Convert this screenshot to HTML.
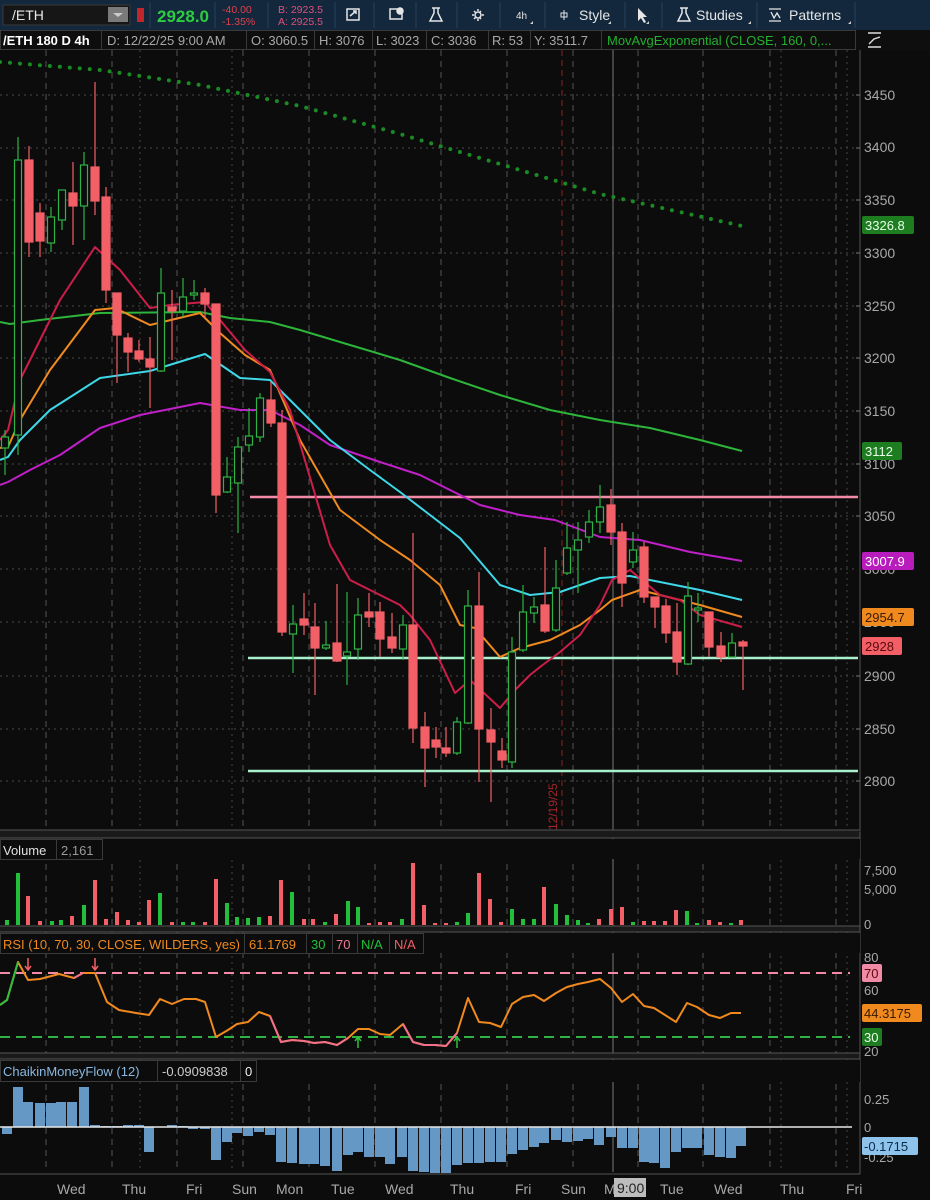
<!DOCTYPE html>
<html><head><meta charset="utf-8"><style>
body{margin:0;width:930px;height:1200px;overflow:hidden;background:#0c0c0c;font-family:"Liberation Sans",sans-serif}
svg{display:block}
</style></head><body>
<svg width="930" height="1200" viewBox="0 0 930 1200" xmlns="http://www.w3.org/2000/svg" font-family="Liberation Sans, sans-serif">
<rect width="930" height="1200" fill="#0c0c0c"/>
<!-- toolbar -->
<rect x="0" y="0" width="930" height="30" fill="#13273d"/>
<rect x="3" y="5" width="127" height="20" fill="#161616" stroke="#3a3a3a"/>
<text x="12" y="20" fill="#e8e8e8" font-size="14">/ETH</text>
<rect x="108" y="7" width="20" height="15" fill="#7a7a7a"/>
<path d="M113 13 L123 13 L118 17Z" fill="#ccc"/>
<rect x="137" y="8" width="7" height="14" fill="#c0262b"/>
<line x1="150" y1="2" x2="150" y2="28" stroke="#24405c"/>
<text x="157" y="22" fill="#2ecc40" font-size="17" font-weight="bold">2928.0</text>
<line x1="215" y1="2" x2="215" y2="28" stroke="#24405c"/>
<text x="222" y="13" fill="#e0404a" font-size="10.5">-40.00</text>
<text x="222" y="25" fill="#e0404a" font-size="10.5">-1.35%</text>
<line x1="268" y1="2" x2="268" y2="28" stroke="#24405c"/>
<text x="278" y="13" fill="#e0507a" font-size="10.5">B: 2923.5</text>
<text x="278" y="25" fill="#e0507a" font-size="10.5">A: 2925.5</text>
<g stroke="#24405c"><line x1="335" y1="2" x2="335" y2="28"/><line x1="374" y1="2" x2="374" y2="28"/><line x1="416" y1="2" x2="416" y2="28"/><line x1="457" y1="2" x2="457" y2="28"/><line x1="500" y1="2" x2="500" y2="28"/><line x1="545" y1="2" x2="545" y2="28"/><line x1="625" y1="2" x2="625" y2="28"/><line x1="662" y1="2" x2="662" y2="28"/><line x1="757" y1="2" x2="757" y2="28"/><line x1="855" y1="2" x2="855" y2="28"/></g>
<g fill="none" stroke="#e6e6e6" stroke-width="1.5">
<rect x="347" y="9" width="12" height="11"/><path d="M350 16 L356 11 M353 11 L356 11 L356 14"/>
<rect x="390" y="9" width="12" height="10"/><circle cx="400" cy="11" r="3" fill="#e6e6e6"/>
<path d="M434 8 L434 13 L430 21 L442 21 L438 13 L438 8 M432 8 L440 8"/>
<circle cx="478" cy="15" r="3"/><path d="M478 9V11M478 19V21M472 15H474M482 15H484M474 11L475.5 12.5M481 11L479.5 12.5M474 19L475.5 17.5M481 19L479.5 17.5"/>
</g>
<text x="516" y="19" fill="#e6e6e6" font-size="10">4h</text>
<path d="M564 10V20M561 13h6v4h-6z" stroke="#e6e6e6" fill="none"/>
<text x="579" y="20" fill="#e6e6e6" font-size="14">Style</text>
<path d="M638 8 L638 21 L641 18 L644 23 L646 22 L643 17 L647 17Z" fill="#e6e6e6"/>
<path d="M682 8 L682 13 L678 21 L690 21 L686 13 L686 8 M680 8 L688 8" fill="none" stroke="#e6e6e6" stroke-width="1.5"/>
<text x="696" y="20" fill="#e6e6e6" font-size="14">Studies</text>
<path d="M769 9H781M771 12 L774 18 L777 13 L780 18M769 21H781" fill="none" stroke="#e6e6e6" stroke-width="1.3"/>
<text x="789" y="20" fill="#e6e6e6" font-size="14">Patterns</text>
<g fill="#ccc"><path d="M530 24l3-3v3z"/><path d="M608 24l3-3v3z"/><path d="M646 24l3-3v3z"/><path d="M748 24l3-3v3z"/><path d="M848 24l3-3v3z"/></g>
<!-- header row -->
<rect x="0" y="30" width="930" height="20" fill="#0e0e0e"/>
<g stroke="#3a3a3a" fill="none">
<rect x="0.5" y="30.5" width="101" height="19"/><rect x="101.5" y="30.5" width="145" height="19"/><rect x="246.5" y="30.5" width="68" height="19"/><rect x="314.5" y="30.5" width="58" height="19"/><rect x="372.5" y="30.5" width="54" height="19"/><rect x="426.5" y="30.5" width="62" height="19"/><rect x="488.5" y="30.5" width="42" height="19"/><rect x="530.5" y="30.5" width="71" height="19"/><rect x="601.5" y="30.5" width="254" height="19"/></g>
<g font-size="13" fill="#a8a8a8">
<text x="3" y="45" fill="#fff" font-weight="bold">/ETH 180 D 4h</text>
<text x="107" y="45">D: 12/22/25 9:00 AM</text>
<text x="251" y="45">O: 3060.5</text>
<text x="319" y="45">H: 3076</text>
<text x="376" y="45">L: 3023</text>
<text x="431" y="45">C: 3036</text>
<text x="492" y="45">R: 53</text>
<text x="534" y="45">Y: 3511.7</text>
<text x="607" y="45" fill="#22b02e">MovAvgExponential (CLOSE, 160, 0,...</text>
</g>
<path d="M868 33h13M868 47h13M869 44 L874 39 L880 37" stroke="#ddd" fill="none" stroke-width="1.4"/>

<!-- main grid -->
<g stroke="#4a4a4a" stroke-dasharray="2,4">
<line x1="0" y1="95" x2="858" y2="95"/><line x1="0" y1="148" x2="858" y2="148"/><line x1="0" y1="200" x2="858" y2="200"/><line x1="0" y1="253" x2="858" y2="253"/><line x1="0" y1="306" x2="858" y2="306"/><line x1="0" y1="358" x2="858" y2="358"/><line x1="0" y1="411" x2="858" y2="411"/><line x1="0" y1="464" x2="858" y2="464"/><line x1="0" y1="516" x2="858" y2="516"/><line x1="0" y1="569" x2="858" y2="569"/><line x1="0" y1="622" x2="858" y2="622"/><line x1="0" y1="676" x2="858" y2="676"/><line x1="0" y1="729" x2="858" y2="729"/><line x1="0" y1="781" x2="858" y2="781"/>
</g>
<g stroke="#555" stroke-dasharray="6,5">
<line x1="46" y1="50" x2="46" y2="1172"/><line x1="112" y1="50" x2="112" y2="1172"/><line x1="177" y1="50" x2="177" y2="1172"/><line x1="243" y1="50" x2="243" y2="1172"/><line x1="309" y1="50" x2="309" y2="1172"/><line x1="375" y1="50" x2="375" y2="1172"/><line x1="441" y1="50" x2="441" y2="1172"/><line x1="507" y1="50" x2="507" y2="1172"/><line x1="573" y1="50" x2="573" y2="1172"/><line x1="638" y1="50" x2="638" y2="1172"/><line x1="703" y1="50" x2="703" y2="1172"/><line x1="770" y1="50" x2="770" y2="1172"/><line x1="836" y1="50" x2="836" y2="1172"/>
</g>
<g stroke="#444" stroke-dasharray="2,4"><line x1="140" y1="50" x2="140" y2="1172"/><line x1="232" y1="50" x2="232" y2="1172"/><line x1="781" y1="50" x2="781" y2="1172"/><line x1="847" y1="50" x2="847" y2="1172"/></g>
<line x1="613" y1="50" x2="613" y2="1172" stroke="#777"/>
<line x1="562" y1="50" x2="562" y2="830" stroke="#8a1f25" stroke-dasharray="6,4"/>
<text transform="translate(557,830) rotate(-90)" fill="#a0262c" font-size="12">12/19/25</text>

<!-- 200 MA dotted -->
<path d="M0 62 L100 70 L200 85 L300 106 L400 134 L500 164 L600 194 L742 226" fill="none" stroke="#1a8a24" stroke-width="4" stroke-linecap="round" stroke-dasharray="0,10"/>
<!-- horizontal levels -->
<line x1="250" y1="497" x2="858" y2="497" stroke="#f28aa8" stroke-width="2.5"/>
<line x1="248" y1="658" x2="858" y2="658" stroke="#a8f0cc" stroke-width="2.5"/>
<line x1="248" y1="771" x2="858" y2="771" stroke="#a8f0cc" stroke-width="2.5"/>

<!-- MAs -->
<g fill="none" stroke-width="2" stroke-linejoin="round">
<polyline stroke="#2cb53a" points="0,322 10,324 40,320 100,313 200,312 230,318 270,322 300,330 350,345 400,360 450,378 500,395 550,410 600,420 650,428 700,440 742,451"/>
<polyline stroke="#c020c8" points="0,485 8,482 30,470 60,455 100,428 140,415 200,403 240,410 270,410 300,425 330,445 380,462 420,475 450,490 480,505 520,515 555,520 600,537 640,540 690,552 742,561"/>
<polyline stroke="#3ed8e8" points="0,460 8,457 20,440 50,410 100,378 150,371 205,354 240,378 270,380 300,410 330,440 370,470 400,492 430,515 460,538 500,585 530,595 560,592 600,578 630,576 660,582 700,590 742,600"/>
<polyline stroke="#f08a1e" points="0,448 8,447 20,420 50,370 95,310 115,308 150,325 200,313 220,333 245,355 270,370 300,440 340,510 380,540 410,560 440,585 460,625 475,628 500,657 520,648 550,640 580,625 600,610 612,600 640,590 660,595 680,600 700,605 742,617"/>
<polyline stroke="#cc1e4a" points="0,440 8,430 20,380 60,300 95,247 120,270 150,308 170,305 205,302 220,320 245,350 270,372 290,410 330,545 350,580 380,595 400,605 410,615 430,640 455,693 470,680 500,708 515,690 530,675 540,667 560,652 580,635 600,605 612,580 630,570 660,595 680,600 700,615 742,627"/>
</g>

<!-- candles -->
<g stroke-width="1.2">
<g stroke="#f25f66" fill="#f25f66">
<line x1="29" y1="146" x2="29" y2="257"/><rect x="25" y="160" width="8" height="82"/>
<line x1="40" y1="203" x2="40" y2="257"/><rect x="36" y="213" width="8" height="28"/>
<line x1="73" y1="162" x2="73" y2="245"/><rect x="69" y="193" width="8" height="13"/>
<line x1="95" y1="82" x2="95" y2="215"/><rect x="91" y="167" width="8" height="34"/>
<line x1="106" y1="187" x2="106" y2="303"/><rect x="102" y="197" width="8" height="93"/>
<line x1="117" y1="293" x2="117" y2="383"/><rect x="113" y="293" width="8" height="42"/>
<line x1="128" y1="333" x2="128" y2="372"/><rect x="124" y="338" width="8" height="14"/>
<line x1="139" y1="340" x2="139" y2="362"/><rect x="135" y="351" width="8" height="8"/>
<line x1="150" y1="337" x2="150" y2="408"/><rect x="146" y="359" width="8" height="8"/>
<line x1="172" y1="290" x2="172" y2="360"/><rect x="168" y="307" width="8" height="4"/>
<line x1="205" y1="288" x2="205" y2="318"/><rect x="201" y="293" width="8" height="11"/>
<line x1="216" y1="304" x2="216" y2="513"/><rect x="212" y="304" width="8" height="191"/>
<line x1="271" y1="382" x2="271" y2="427"/><rect x="267" y="400" width="8" height="23"/>
<line x1="282" y1="410" x2="282" y2="636"/><rect x="278" y="423" width="8" height="209"/>
<line x1="304" y1="593" x2="304" y2="635"/><rect x="300" y="619" width="8" height="6"/>
<line x1="315" y1="603" x2="315" y2="695"/><rect x="311" y="627" width="8" height="21"/>
<line x1="337" y1="584" x2="337" y2="662"/><rect x="333" y="643" width="8" height="18"/>
<line x1="369" y1="593" x2="369" y2="627"/><rect x="365" y="612" width="8" height="5"/>
<line x1="380" y1="602" x2="380" y2="657"/><rect x="376" y="612" width="8" height="27"/>
<line x1="392" y1="613" x2="392" y2="653"/><rect x="388" y="637" width="8" height="11"/>
<line x1="413" y1="533" x2="413" y2="743"/><rect x="409" y="625" width="8" height="103"/>
<line x1="425" y1="712" x2="425" y2="787"/><rect x="421" y="727" width="8" height="21"/>
<line x1="436" y1="727" x2="436" y2="758"/><rect x="432" y="740" width="8" height="7"/>
<line x1="446" y1="727" x2="446" y2="757"/><rect x="442" y="748" width="8" height="5"/>
<line x1="479" y1="572" x2="479" y2="782"/><rect x="475" y="606" width="8" height="123"/>
<line x1="491" y1="708" x2="491" y2="802"/><rect x="487" y="730" width="8" height="12"/>
<line x1="502" y1="738" x2="502" y2="768"/><rect x="498" y="751" width="8" height="9"/>
<line x1="545" y1="547" x2="545" y2="633"/><rect x="541" y="605" width="8" height="26"/>
<line x1="611" y1="489" x2="611" y2="545"/><rect x="607" y="505" width="8" height="27"/>
<line x1="622" y1="523" x2="622" y2="607"/><rect x="618" y="532" width="8" height="51"/>
<line x1="644" y1="542" x2="644" y2="603"/><rect x="640" y="547" width="8" height="50"/>
<line x1="655" y1="597" x2="655" y2="628"/><rect x="651" y="597" width="8" height="10"/>
<line x1="666" y1="599" x2="666" y2="643"/><rect x="662" y="606" width="8" height="27"/>
<line x1="677" y1="603" x2="677" y2="675"/><rect x="673" y="632" width="8" height="30"/>
<line x1="709" y1="612" x2="709" y2="657"/><rect x="705" y="612" width="8" height="35"/>
<line x1="721" y1="632" x2="721" y2="662"/><rect x="717" y="646" width="8" height="11"/>
<line x1="743" y1="640" x2="743" y2="690"/><rect x="739" y="642" width="8" height="4"/>
</g>
<g stroke="#2fb344" fill="#0c0c0c">
<line x1="5" y1="430" x2="5" y2="475"/><rect x="1.5" y="437" width="7" height="11"/>
<line x1="18" y1="137" x2="18" y2="455"/><rect x="14.5" y="160" width="7" height="275"/>
<line x1="51" y1="207" x2="51" y2="252"/><rect x="47.5" y="217" width="7" height="26"/>
<line x1="62" y1="190" x2="62" y2="230"/><rect x="58.5" y="190" width="7" height="30"/>
<line x1="84" y1="152" x2="84" y2="240"/><rect x="80.5" y="165" width="7" height="41"/>
<line x1="161" y1="268" x2="161" y2="372"/><rect x="157.5" y="293" width="7" height="78"/>
<line x1="183" y1="278" x2="183" y2="317"/><rect x="179.5" y="297" width="7" height="14"/>
<line x1="194" y1="280" x2="194" y2="300"/><rect x="190.5" y="293" width="7" height="2"/>
<line x1="227" y1="457" x2="227" y2="493"/><rect x="223.5" y="477" width="7" height="15"/>
<line x1="238" y1="437" x2="238" y2="533"/><rect x="234.5" y="447" width="7" height="36"/>
<line x1="249" y1="408" x2="249" y2="452"/><rect x="245.5" y="436" width="7" height="9"/>
<line x1="260" y1="393" x2="260" y2="442"/><rect x="256.5" y="398" width="7" height="39"/>
<line x1="293" y1="605" x2="293" y2="673"/><rect x="289.5" y="624" width="7" height="10"/>
<line x1="326" y1="621" x2="326" y2="650"/><rect x="322.5" y="645" width="7" height="3"/>
<line x1="347" y1="592" x2="347" y2="685"/><rect x="343.5" y="652" width="7" height="4"/>
<line x1="358" y1="598" x2="358" y2="660"/><rect x="354.5" y="615" width="7" height="34"/>
<line x1="403" y1="615" x2="403" y2="660"/><rect x="399.5" y="625" width="7" height="24"/>
<line x1="457" y1="717" x2="457" y2="755"/><rect x="453.5" y="722" width="7" height="31"/>
<line x1="468" y1="590" x2="468" y2="724"/><rect x="464.5" y="606" width="7" height="117"/>
<line x1="512" y1="637" x2="512" y2="768"/><rect x="508.5" y="652" width="7" height="110"/>
<line x1="523" y1="585" x2="523" y2="652"/><rect x="519.5" y="612" width="7" height="38"/>
<line x1="534" y1="597" x2="534" y2="623"/><rect x="530.5" y="607" width="7" height="6"/>
<line x1="556" y1="560" x2="556" y2="632"/><rect x="552.5" y="588" width="7" height="42"/>
<line x1="567" y1="522" x2="567" y2="575"/><rect x="563.5" y="548" width="7" height="25"/>
<line x1="578" y1="522" x2="578" y2="593"/><rect x="574.5" y="540" width="7" height="10"/>
<line x1="589" y1="510" x2="589" y2="543"/><rect x="585.5" y="522" width="7" height="15"/>
<line x1="600" y1="485" x2="600" y2="533"/><rect x="596.5" y="507" width="7" height="15"/>
<line x1="633" y1="532" x2="633" y2="568"/><rect x="629.5" y="550" width="7" height="12"/>
<line x1="688" y1="582" x2="688" y2="665"/><rect x="684.5" y="596" width="7" height="68"/>
<line x1="698" y1="593" x2="698" y2="622"/><rect x="694.5" y="608" width="7" height="2"/>
<line x1="732" y1="633" x2="732" y2="657"/><rect x="728.5" y="643" width="7" height="14"/>
</g>
</g>

<!-- right axis main -->
<rect x="860" y="50" width="70" height="1150" fill="#0c0c0c"/>
<line x1="860" y1="50" x2="860" y2="832" stroke="#555"/>
<g fill="#a8a8a8" font-size="14">
<text x="864" y="100">3450</text><text x="864" y="152">3400</text><text x="864" y="205">3350</text><text x="864" y="258">3300</text><text x="864" y="311">3250</text><text x="864" y="363">3200</text><text x="864" y="416">3150</text><text x="864" y="469">3100</text><text x="864" y="521">3050</text><text x="864" y="574">3000</text><text x="864" y="627">2950</text><text x="864" y="681">2900</text><text x="864" y="734">2850</text><text x="864" y="786">2800</text>
</g>
<g stroke="#777"><line x1="856" y1="95" x2="860" y2="95"/><line x1="856" y1="148" x2="860" y2="148"/><line x1="856" y1="200" x2="860" y2="200"/><line x1="856" y1="253" x2="860" y2="253"/><line x1="856" y1="306" x2="860" y2="306"/><line x1="856" y1="358" x2="860" y2="358"/><line x1="856" y1="411" x2="860" y2="411"/><line x1="856" y1="464" x2="860" y2="464"/><line x1="856" y1="516" x2="860" y2="516"/><line x1="856" y1="676" x2="860" y2="676"/><line x1="856" y1="729" x2="860" y2="729"/><line x1="856" y1="781" x2="860" y2="781"/></g>
<g font-size="13">
<rect x="862" y="216" width="52" height="18" rx="2" fill="#1d7d20"/><text x="865" y="230" fill="#e8ffe8">3326.8</text>
<rect x="862" y="442" width="40" height="18" rx="2" fill="#1d7d20"/><text x="865" y="456" fill="#e8ffe8">3112</text>
<rect x="862" y="552" width="52" height="18" rx="2" fill="#b81cbc"/><text x="865" y="566" fill="#fff">3007.9</text>
<rect x="862" y="608" width="52" height="18" rx="2" fill="#f08a1e"/><text x="865" y="622" fill="#3a1a00">2954.7</text>
<rect x="862" y="637" width="40" height="18" rx="2" fill="#f25f66"/><text x="865" y="651" fill="#5a0a0a">2928</text>
</g>

<!-- panel separators -->
<rect x="0" y="830" width="860" height="8" fill="#1a1a1a"/>
<line x1="0" y1="830" x2="860" y2="830" stroke="#555"/><line x1="0" y1="838" x2="860" y2="838" stroke="#555"/>
<rect x="0" y="926" width="860" height="6" fill="#1a1a1a"/><line x1="0" y1="926" x2="860" y2="926" stroke="#555"/><line x1="0" y1="932" x2="860" y2="932" stroke="#555"/>
<rect x="0" y="1053" width="860" height="6" fill="#1a1a1a"/><line x1="0" y1="1053" x2="860" y2="1053" stroke="#555"/><line x1="0" y1="1059" x2="860" y2="1059" stroke="#555"/>
<line x1="860" y1="832" x2="860" y2="1174" stroke="#555"/>
<line x1="0" y1="1174" x2="860" y2="1174" stroke="#555"/>

<!-- volume -->
<rect x="0" y="839" width="860" height="20" fill="#0c0c0c"/>
<rect x="0.5" y="839.5" width="56" height="20" fill="none" stroke="#3a3a3a"/><rect x="56.5" y="839.5" width="46" height="20" fill="none" stroke="#3a3a3a"/>
<text x="3" y="855" fill="#e0e0e0" font-size="13">Volume</text><text x="61" y="855" fill="#999" font-size="13">2,161</text>
<g fill="#22c03a">
<rect x="5" y="920" width="4" height="5"/><rect x="16" y="873" width="4" height="52"/><rect x="50" y="921" width="4" height="4"/><rect x="59" y="920" width="4" height="5"/><rect x="82" y="905" width="4" height="20"/><rect x="158" y="893" width="4" height="32"/><rect x="181" y="922" width="4" height="3"/><rect x="191" y="922" width="4" height="3"/><rect x="225" y="903" width="4" height="22"/><rect x="235" y="917" width="4" height="8"/><rect x="246" y="918" width="4" height="7"/><rect x="257" y="917" width="4" height="8"/><rect x="290" y="892" width="4" height="33"/><rect x="323" y="922" width="4" height="3"/><rect x="346" y="901" width="4" height="24"/><rect x="356" y="907" width="4" height="18"/><rect x="400" y="919" width="4" height="6"/><rect x="455" y="922" width="4" height="3"/><rect x="466" y="913" width="4" height="12"/><rect x="510" y="909" width="4" height="16"/><rect x="521" y="919" width="4" height="6"/><rect x="532" y="919" width="4" height="6"/><rect x="554" y="904" width="4" height="21"/><rect x="565" y="915" width="4" height="10"/><rect x="576" y="920" width="4" height="5"/><rect x="586" y="923" width="4" height="2"/><rect x="631" y="922" width="4" height="3"/><rect x="685" y="911" width="4" height="14"/><rect x="695" y="923" width="4" height="2"/><rect x="729" y="923" width="4" height="2"/>
</g>
<g fill="#f25f66">
<rect x="26" y="896" width="4" height="29"/><rect x="38" y="921" width="4" height="4"/><rect x="70" y="916" width="4" height="9"/><rect x="93" y="880" width="4" height="45"/><rect x="104" y="919" width="4" height="6"/><rect x="115" y="912" width="4" height="13"/><rect x="126" y="920" width="4" height="5"/><rect x="137" y="922" width="4" height="3"/><rect x="147" y="900" width="4" height="25"/><rect x="170" y="922" width="4" height="3"/><rect x="203" y="922" width="4" height="3"/><rect x="214" y="879" width="4" height="46"/><rect x="268" y="916" width="4" height="9"/><rect x="279" y="880" width="4" height="45"/><rect x="302" y="919" width="4" height="6"/><rect x="311" y="919" width="4" height="6"/><rect x="334" y="914" width="4" height="11"/><rect x="367" y="923" width="4" height="2"/><rect x="378" y="922" width="4" height="3"/><rect x="388" y="922" width="4" height="3"/><rect x="411" y="863" width="4" height="62"/><rect x="422" y="905" width="4" height="20"/><rect x="433" y="923" width="4" height="2"/><rect x="444" y="923" width="4" height="2"/><rect x="477" y="873" width="4" height="52"/><rect x="488" y="899" width="4" height="26"/><rect x="499" y="922" width="4" height="3"/><rect x="542" y="887" width="4" height="38"/><rect x="597" y="919" width="4" height="6"/><rect x="609" y="909" width="4" height="16"/><rect x="620" y="907" width="4" height="18"/><rect x="642" y="921" width="4" height="4"/><rect x="652" y="921" width="4" height="4"/><rect x="663" y="921" width="4" height="4"/><rect x="674" y="910" width="4" height="15"/><rect x="707" y="920" width="4" height="5"/><rect x="718" y="922" width="4" height="3"/><rect x="739" y="920" width="4" height="5"/>
</g>
<g fill="#a8a8a8" font-size="13"><text x="864" y="875">7,500</text><text x="864" y="894">5,000</text><text x="864" y="929">0</text></g>

<!-- RSI -->
<rect x="0" y="933" width="860" height="20" fill="#0c0c0c"/>
<g fill="none" stroke="#3a3a3a"><rect x="0.5" y="933.5" width="244" height="20"/><rect x="244.5" y="933.5" width="62" height="20"/><rect x="306.5" y="933.5" width="26" height="20"/><rect x="332.5" y="933.5" width="25" height="20"/><rect x="357.5" y="933.5" width="32" height="20"/><rect x="389.5" y="933.5" width="34" height="20"/></g>
<g font-size="13"><text x="3" y="949" fill="#f08a1e">RSI (10, 70, 30, CLOSE, WILDERS, yes)</text><text x="249" y="949" fill="#f08a1e">61.1769</text><text x="311" y="949" fill="#22c03a">30</text><text x="336" y="949" fill="#f27a96">70</text><text x="361" y="949" fill="#22c03a">N/A</text><text x="394" y="949" fill="#f25f66">N/A</text></g>
<line x1="0" y1="973" x2="850" y2="973" stroke="#f08aa5" stroke-width="2" stroke-dasharray="10,6"/>
<line x1="0" y1="1037" x2="850" y2="1037" stroke="#2fb344" stroke-width="2" stroke-dasharray="10,6"/>
<polyline fill="none" stroke="#f08a1e" stroke-width="2" stroke-linejoin="round" points="0,1005 7,1000 18,962 28,980 40,979 59,974 74,978 83,973 95,973 107,1002 119,1010 136,1013 149,1015 160,999 172,1004 184,999 196,999 205,1002 216,1037 228,1030 237,1024 248,1022 259,1012 270,1016 281,1042 292,1040 304,1041 314,1043 325,1042 337,1045 348,1038 358,1029 369,1029 380,1034 390,1035 403,1024 413,1042 424,1045 435,1045 446,1046 457,1033 468,998 479,1022 490,1023 501,1027 512,1004 523,997 534,995 544,1001 556,993 567,987 578,984 588,982 600,979 611,988 622,1002 633,994 644,1006 654,1008 665,1015 676,1022 687,1003 697,1007 709,1015 720,1018 731,1013 741,1013"/>
<polyline fill="none" stroke="#2fc040" stroke-width="2" points="0,1005 7,1000 18,962"/>
<polyline fill="none" stroke="#f2708a" stroke-width="2" points="74,978 83,973"/>
<polyline fill="none" stroke="#f2708a" stroke-width="2" points="270,1016 281,1042 292,1040 304,1041 314,1043 325,1042 337,1045 348,1038"/>
<polyline fill="none" stroke="#f2708a" stroke-width="2" points="403,1024 413,1042 424,1045 435,1045 446,1046 457,1033"/>
<g stroke-width="1.5"><path d="M28 958V970M25 966L28 970L31 966" stroke="#f25f66" fill="none"/><path d="M95 958V970M92 966L95 970L98 966" stroke="#f25f66" fill="none"/><path d="M358 1048V1037M355 1041L358 1037L361 1041" stroke="#2fc040" fill="none"/><path d="M457 1048V1037M454 1041L457 1037L460 1041" stroke="#2fc040" fill="none"/></g>
<g fill="#a8a8a8" font-size="13"><text x="864" y="962">80</text><text x="864" y="995">60</text><text x="864" y="1020">40</text><text x="864" y="1056">20</text></g>
<g font-size="13"><rect x="862" y="964" width="20" height="18" rx="2" fill="#f08aa5"/><text x="864" y="978" fill="#5a0a0a">70</text>
<rect x="862" y="1004" width="60" height="18" rx="2" fill="#f08a1e"/><text x="864" y="1018" fill="#3a1a00">44.3175</text>
<rect x="862" y="1028" width="20" height="18" rx="2" fill="#1d7d20"/><text x="864" y="1042" fill="#e8ffe8">30</text></g>

<!-- CMF -->
<rect x="0" y="1060" width="860" height="22" fill="#0c0c0c"/>
<g fill="none" stroke="#3a3a3a"><rect x="0.5" y="1060.5" width="157" height="21"/><rect x="157.5" y="1060.5" width="83" height="21"/><rect x="240.5" y="1060.5" width="16" height="21"/></g>
<g font-size="13"><text x="3" y="1076" fill="#8ab8e0">ChaikinMoneyFlow (12)</text><text x="162" y="1076" fill="#ccc">-0.0909838</text><text x="245" y="1076" fill="#eee">0</text></g>
<g fill="#6598c4">
<rect x="2" y="1127" width="10" height="7"/><rect x="13" y="1087" width="10" height="40"/><rect x="23" y="1102" width="10" height="25"/><rect x="35" y="1103" width="10" height="24"/><rect x="46" y="1103" width="10" height="24"/><rect x="56" y="1102" width="10" height="25"/><rect x="67" y="1102" width="10" height="25"/><rect x="79" y="1087" width="10" height="40"/><rect x="90" y="1125" width="10" height="2"/><rect x="101" y="1126" width="10" height="1"/><rect x="112" y="1126" width="10" height="1"/><rect x="123" y="1125" width="10" height="2"/><rect x="134" y="1125" width="10" height="2"/><rect x="144" y="1127" width="10" height="25"/><rect x="167" y="1125" width="10" height="2"/><rect x="178" y="1126" width="10" height="1"/><rect x="188" y="1127" width="10" height="2"/><rect x="200" y="1127" width="10" height="2"/><rect x="211" y="1127" width="10" height="33"/><rect x="222" y="1127" width="10" height="15"/><rect x="232" y="1127" width="10" height="6"/><rect x="243" y="1127" width="10" height="9"/><rect x="254" y="1127" width="10" height="5"/><rect x="265" y="1127" width="10" height="8"/><rect x="276" y="1127" width="10" height="35"/><rect x="287" y="1127" width="10" height="36"/><rect x="299" y="1127" width="10" height="37"/><rect x="309" y="1127" width="10" height="37"/><rect x="320" y="1127" width="10" height="39"/><rect x="332" y="1127" width="10" height="44"/><rect x="343" y="1127" width="10" height="28"/><rect x="353" y="1127" width="10" height="25"/><rect x="364" y="1127" width="10" height="30"/><rect x="375" y="1127" width="10" height="30"/><rect x="385" y="1127" width="10" height="37"/><rect x="397" y="1127" width="10" height="30"/><rect x="408" y="1127" width="10" height="44"/><rect x="419" y="1127" width="10" height="45"/><rect x="430" y="1127" width="10" height="46"/><rect x="441" y="1127" width="10" height="46"/><rect x="452" y="1127" width="10" height="38"/><rect x="463" y="1127" width="10" height="36"/><rect x="474" y="1127" width="10" height="36"/><rect x="485" y="1127" width="10" height="35"/><rect x="496" y="1127" width="10" height="35"/><rect x="507" y="1127" width="10" height="27"/><rect x="518" y="1127" width="10" height="23"/><rect x="529" y="1127" width="10" height="20"/><rect x="539" y="1127" width="10" height="16"/><rect x="551" y="1127" width="10" height="13"/><rect x="562" y="1127" width="10" height="15"/><rect x="573" y="1127" width="10" height="14"/><rect x="583" y="1127" width="10" height="12"/><rect x="594" y="1127" width="10" height="18"/><rect x="606" y="1127" width="10" height="10"/><rect x="617" y="1127" width="10" height="21"/><rect x="628" y="1127" width="10" height="21"/><rect x="639" y="1127" width="10" height="35"/><rect x="649" y="1127" width="10" height="36"/><rect x="660" y="1127" width="10" height="41"/><rect x="671" y="1127" width="10" height="25"/><rect x="682" y="1127" width="10" height="21"/><rect x="692" y="1127" width="10" height="21"/><rect x="704" y="1127" width="10" height="28"/><rect x="715" y="1127" width="10" height="30"/><rect x="726" y="1127" width="10" height="31"/><rect x="736" y="1127" width="10" height="19"/>
</g>
<line x1="0" y1="1127" x2="852" y2="1127" stroke="#e8e8e8" stroke-width="1.5"/>
<g fill="#a8a8a8" font-size="13"><text x="864" y="1104">0.25</text><text x="864" y="1132">0</text><text x="864" y="1162">-0.25</text></g>
<rect x="862" y="1137" width="56" height="18" rx="2" fill="#8ec4ec"/><text x="864" y="1151" fill="#0a2a4a" font-size="13">-0.1715</text>

<!-- time axis -->
<g fill="#a8a8a8" font-size="14">
<text x="57" y="1194">Wed</text><text x="122" y="1194">Thu</text><text x="186" y="1194">Fri</text><text x="232" y="1194">Sun</text><text x="276" y="1194">Mon</text><text x="331" y="1194">Tue</text><text x="385" y="1194">Wed</text><text x="450" y="1194">Thu</text><text x="515" y="1194">Fri</text><text x="561" y="1194">Sun</text><text x="604" y="1194">M</text><text x="660" y="1194">Tue</text><text x="714" y="1194">Wed</text><text x="780" y="1194">Thu</text><text x="846" y="1194">Fri</text>
</g>
<rect x="614" y="1178" width="32" height="19" fill="#bdbdbd"/><text x="617" y="1193" fill="#222" font-size="14">9:00</text>
</svg>
</body></html>
